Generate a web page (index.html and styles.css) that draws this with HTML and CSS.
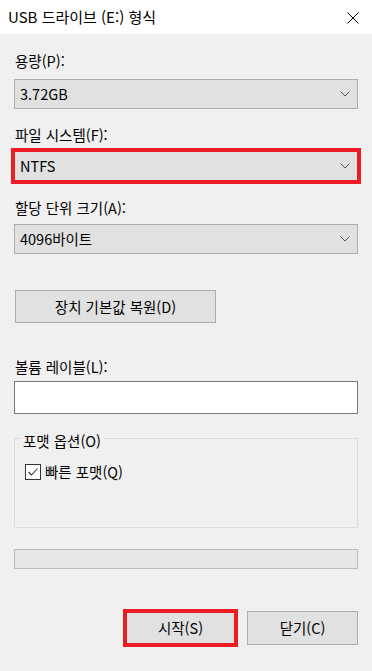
FILE: index.html
```html
<!DOCTYPE html>
<html lang="ko">
<head>
<meta charset="utf-8">
<title>USB 드라이브 (E:) 형식</title>
<link rel="stylesheet" href="styles.css">
</head>
<body>
<div class="titlebar">
  <span class="title">USB 드라이브 (E:) 형식</span>
  <svg class="close" width="12" height="12" viewBox="0 0 12 12"><path d="M0.5 0.5 L11.5 11.5 M11.5 0.5 L0.5 11.5" stroke="#000" stroke-width="1" fill="none"/></svg>
</div>
<main class="dialog">
  <div class="lbl lbl-cap">용량(P):</div>
  <div class="combo"><span>3.72GB</span><svg class="chev" width="10" height="6" viewBox="0 0 10 6"><path d="M0.5 0.5 L5 5 L9.5 0.5" stroke="#555" stroke-width="1" fill="none"/></svg></div>

  <div class="lbl lbl-fs">파일 시스템(F):</div>
  <div class="combo combo-marked"><span>NTFS</span><svg class="chev" width="10" height="6" viewBox="0 0 10 6"><path d="M0.5 0.5 L5 5 L9.5 0.5" stroke="#555" stroke-width="1" fill="none"/></svg></div>

  <div class="lbl lbl-alloc">할당 단위 크기(A):</div>
  <div class="combo"><span>4096바이트</span><svg class="chev" width="10" height="6" viewBox="0 0 10 6"><path d="M0.5 0.5 L5 5 L9.5 0.5" stroke="#555" stroke-width="1" fill="none"/></svg></div>

  <button class="btn btn-restore">장치 기본값 복원(D)</button>

  <div class="lbl lbl-vol">볼륨 레이블(L):</div>
  <div class="textbox"></div>

  <fieldset class="group">
    <legend>포맷 옵션(O)</legend>
    <div class="check-row">
      <span class="checkbox"><svg width="14" height="14" viewBox="0 0 14 14"><path d="M2.5 7 L5.5 10 L11.5 3.5" stroke="#333" stroke-width="1.1" fill="none"/></svg></span>
      <span>빠른 포맷(Q)</span>
    </div>
  </fieldset>

  <div class="progress"></div>

  <div class="actions">
    <button class="btn btn-action btn-marked">시작(S)</button>
    <button class="btn btn-action">닫기(C)</button>
  </div>
</main>
</body>
</html>
```
FILE: styles.css
```css
* { box-sizing: border-box; }
html, body { margin: 0; padding: 0; }
body {
  width: 372px;
  height: 671px;
  background: #f0f0f0;
  font-family: "Noto Sans CJK KR", "Noto Sans", sans-serif;
  font-size: 14.5px;
  color: #000;
  overflow: hidden;
}
.titlebar {
  height: 34px;
  background: #fff;
  display: flex;
  align-items: center;
  justify-content: space-between;
  padding: 0 13px 0 8px;
}
.title { font-size: 15px; line-height: 20px; }
.close { display: block; margin-top: 1px; }

.dialog {
  padding: 0 14px;
  display: flex;
  flex-direction: column;
}
.lbl { line-height: 20px; padding-left: 1px; }
.lbl-cap { margin-top: 17px; margin-bottom: 8px; }
.lbl-fs { margin-top: 16px; margin-bottom: 6px; }
.lbl-alloc { margin-top: 17px; margin-bottom: 6px; }
.lbl-vol { margin-top: 34px; margin-bottom: 4px; }

.combo {
  height: 30px;
  border: 1px solid #adadad;
  background: #e1e1e1;
  display: flex;
  align-items: center;
  justify-content: space-between;
  padding: 0 7px 0 5px;
  line-height: 20px;
}
.combo-marked {
  outline: 4px solid #ed1c24;
  outline-offset: -1px;
}
.chev { display: block; }

.btn {
  font-family: inherit;
  font-size: 14.5px;
  color: #000;
  background: #e1e1e1;
  border: 1px solid #adadad;
  padding: 0;
  line-height: 20px;
  border-radius: 0;
}
.btn-restore {
  align-self: flex-start;
  margin: 36px 0 0 1px;
  width: 201px;
  height: 33px;
}

.textbox {
  height: 33px;
  border: 1px solid #7a7a7a;
  background: #fff;
}

.group {
  margin: 11px 0 0 0;
  border: 1px solid #dcdcdc;
  padding: 0 0 0 6px;
  height: 103px;
}
.group legend {
  padding: 6px 2px 0;
  line-height: 20px;
}
.check-row {
  display: flex;
  align-items: center;
  gap: 4px;
  margin-top: 11px;
  margin-left: 4px;
  line-height: 20px;
}
.checkbox {
  width: 16px;
  height: 16px;
  border: 1px solid #333;
  background: #fff;
  display: flex;
  align-items: center;
  justify-content: center;
}
.checkbox svg { display: block; }

.progress {
  margin-top: 21px;
  height: 20px;
  border: 1px solid #bcbcbc;
  background: #e6e6e6;
}

.actions {
  display: flex;
  justify-content: flex-end;
  gap: 11px;
  margin-top: 42px;
}
.btn-action {
  width: 111px;
  height: 34px;
}
.btn-marked {
  outline: 4px solid #ed1c24;
  outline-offset: -2px;
}
```
